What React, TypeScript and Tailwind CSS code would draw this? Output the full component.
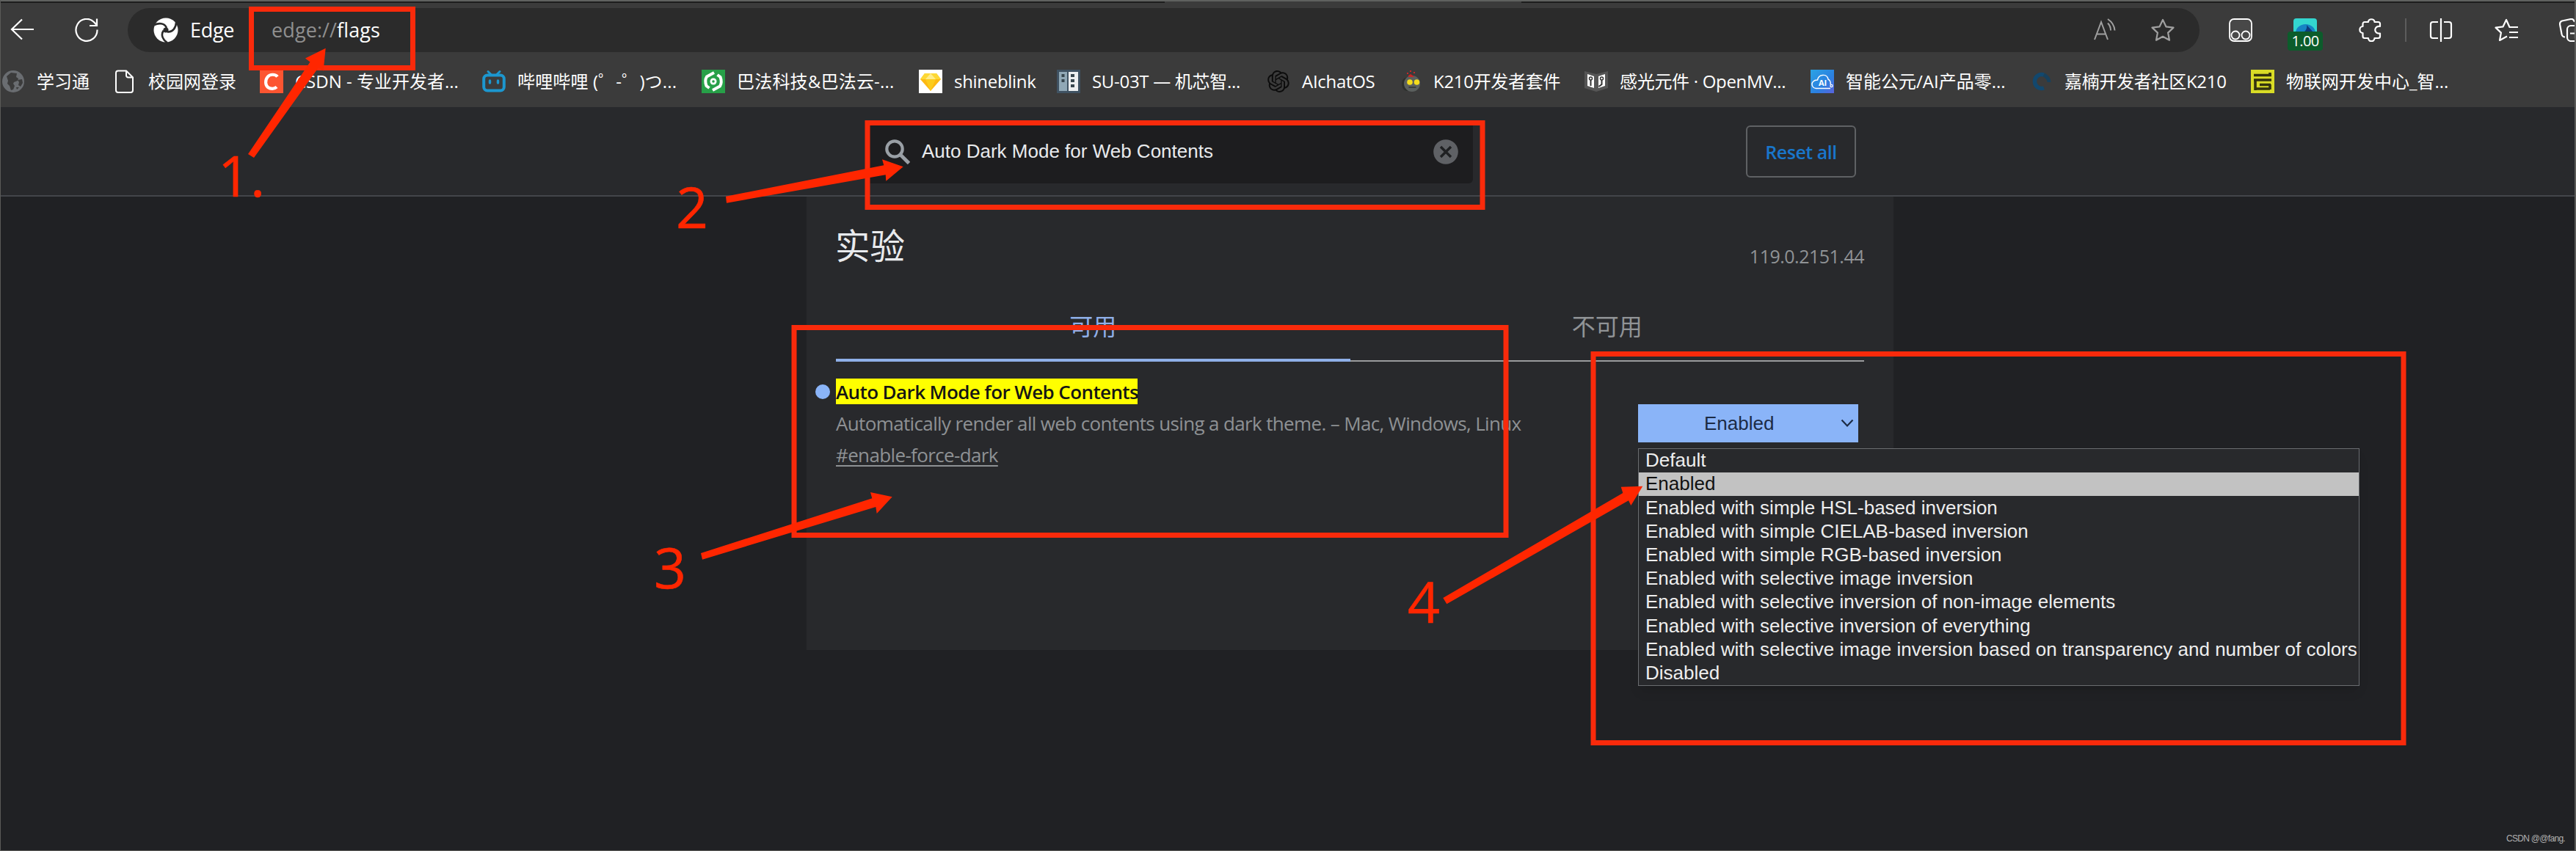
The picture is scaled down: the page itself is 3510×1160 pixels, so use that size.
import { ReactNode } from 'react';
import { RiOpenaiFill } from 'react-icons/ri';

interface IBookmark {
  title: string;
  width: string;
  tracking?: string;
  icon: ReactNode;
}

const options = [
  'Default',
  'Enabled',
  'Enabled with simple HSL-based inversion',
  'Enabled with simple CIELAB-based inversion',
  'Enabled with simple RGB-based inversion',
  'Enabled with selective image inversion',
  'Enabled with selective inversion of non-image elements',
  'Enabled with selective inversion of everything',
  'Enabled with selective image inversion based on transparency and number of colors',
  'Disabled',
];

const bookmarks: IBookmark[] = [
  {
    title: '学习通',
    width: 'w-[152px]',
    icon: (
      <svg viewBox="0 0 32 32" className="size-8">
        <circle cx="16" cy="16" r="15" fill="#6a6d71" />
        <path d="M7 9l6-5 8 1-1 5 3 2-1 3-5 2-1 2 2 3-2 5-3 1-2-6-3-3 1-4zM22 14l6-1 1 5-3 5-3-2 1-4zM20 24l4 0-3 3z" fill="#3b3b3b" />
      </svg>
    ),
  },
  {
    title: '校园网登录',
    width: 'w-[200px]',
    icon: (
      <svg viewBox="0 0 32 32" className="size-8" fill="none" stroke="#fff" strokeWidth="2">
        <path d="M7 1.500h11l9 9V28a3 3 0 0 1-3 3H7a3 3 0 0 1-3-3V4.500a3 3 0 0 1 3-3zM18 1.500V8a2.500 2.500 0 0 0 2.500 2.500H27" />
      </svg>
    ),
  },
  {
    title: 'CSDN - 专业开发者...',
    width: 'w-[303px]',
    icon: (
      <svg viewBox="0 0 32 32" className="size-8">
        <rect width="32" height="32" fill="#fc5531" />
        <path d="M24 9.500C21.500 6 14 5.500 10.500 10c-3.500 4.500-3 11 .5 14 3.500 2.500 9 2.500 12-.5" fill="none" stroke="#fff" strokeWidth="4.200" />
      </svg>
    ),
  },
  {
    title: '哔哩哔哩 (゜-゜)つ...',
    width: 'w-[299px]',
    tracking: 'tracking-[0.15px]',
    icon: (
      <svg viewBox="0 0 32 32" className="size-8" fill="none" stroke="#1c97cf" strokeWidth="4" strokeLinecap="round">
        <rect x="2.200" y="7.500" width="27.600" height="21" rx="5" />
        <path d="M8 2.500l4 4M24 2.500l-4 4" strokeWidth="3" />
        <path d="M10.500 15v3M21.500 15v3" strokeWidth="3.400" />
      </svg>
    ),
  },
  {
    title: '巴法科技&巴法云-...',
    width: 'w-[296px]',
    tracking: 'tracking-[0.2px]',
    icon: (
      <svg viewBox="0 0 32 32" className="size-8">
        <rect width="32" height="32" fill="#27a048" />
        <path d="M17 4L7 9.500c-2.500 4-2 8.500-.5 12.500l4 3M15 28l10-5.500c2.500-4 2-8.500.5-12.500L21.500 7" fill="none" stroke="#fff" strokeWidth="4" />
        <circle cx="16" cy="16" r="4.500" fill="#fff" />
        <circle cx="16" cy="16" r="1.800" fill="#27a048" />
      </svg>
    ),
  },
  {
    title: 'shineblink',
    width: 'w-[188px]',
    tracking: 'tracking-[-0.3px]',
    icon: (
      <svg viewBox="0 0 32 32" className="size-8">
        <rect width="32" height="32" fill="#fff" />
        <path d="M8 5h16l6 8-14 16L2 13z" fill="#fdb913" />
        <path d="M8 5h16l6 8H2z" fill="#fdd835" />
        <path d="M16 5l7 8H9z" fill="#ffec8a" />
        <path d="M9 13h14l-7 16z" fill="#fccc1c" />
      </svg>
    ),
  },
  {
    title: 'SU-03T — 机芯智...',
    width: 'w-[286px]',
    tracking: 'tracking-[-0.3px]',
    icon: (
      <svg viewBox="0 0 32 32" className="size-8">
        <rect width="32" height="32" fill="#3f5262" />
        <rect x="3" y="3" width="11" height="26" fill="#90a8b6" />
        <rect x="16" y="3" width="13" height="26" fill="#eceff1" />
        <path d="M6.500 6h4v4h-4zM6.500 13h4v4h-4zM19 6h5v4h-5zM19 13h5v4h-5zM19 20h5v4h-5z" fill="#37474f" />
      </svg>
    ),
  },
  {
    title: 'AIchatOS',
    width: 'w-[179px]',
    tracking: 'tracking-[-0.3px]',
    icon: <RiOpenaiFill className="size-9 -mx-0.5 text-[#0c0c0c]" />,
  },
  {
    title: 'K210开发者套件',
    width: 'w-[254px]',
    tracking: 'tracking-[-0.3px]',
    icon: (
      <svg viewBox="0 0 32 32" className="size-8">
        <path d="M5 19c0-6 4-9 11-9l6 19H13c-5 0-8-4-8-10z" fill="#2c2f2c" />
        <ellipse cx="19" cy="19" rx="11" ry="11" fill="#5b605e" />
        <circle cx="16" cy="17" r="3.800" fill="#f4dc1c" />
        <circle cx="25.500" cy="17" r="3.800" fill="#f4dc1c" />
        <path d="M14.500 24h10" stroke="#3a3d3c" strokeWidth="2" />
        <path d="M14 8l3-2 3 2 2 2-8 0zM16 1h2v2h-2zM12 4h2v2h-2zM21 3h2v2h-2z" fill="#c62828" />
      </svg>
    ),
  },
  {
    title: '感光元件 · OpenMV...',
    width: 'w-[308px]',
    tracking: 'tracking-[-0.3px]',
    icon: (
      <svg viewBox="0 0 32 32" className="size-8">
        <path d="M0 2l16 4 16-4v23l-16 5-16-5z" fill="#555" />
        <path d="M4 6l9 3v16l-9-3zM28 6l-9 3v16l9-3z" fill="#fff" />
        <path d="M8.500 22V14M23.500 12v8l-4 3" stroke="#333" strokeWidth="2" fill="none" />
        <circle cx="8.500" cy="12" r="2" fill="none" stroke="#333" strokeWidth="1.500" />
        <circle cx="23.500" cy="12" r="2" fill="#fff" stroke="#333" strokeWidth="1.500" />
      </svg>
    ),
  },
  {
    title: '智能公元/AI产品零...',
    width: 'w-[298px]',
    icon: (
      <svg viewBox="0 0 32 32" className="size-8">
        <defs>
          <linearGradient id="cloud" x1="0" y1="0" x2="1" y2="1">
            <stop offset="0" stopColor="#2ba4e4" />
            <stop offset=".6" stopColor="#2b80e0" />
            <stop offset="1" stopColor="#5a63dc" />
          </linearGradient>
        </defs>
        <rect width="32" height="32" fill="url(#cloud)" />
        <path d="M27 20c1-3-1-6-3-7-1-5-5-6-8-5.500-4 .5-6 4-6.500 6.500C4 14 2 17.500 2 20c0 3 2.500 5.500 5.500 5.500H27" fill="none" stroke="#fff" strokeWidth="1.400" />
        <circle cx="28.500" cy="22" r="1.600" fill="none" stroke="#fff" strokeWidth="1.200" />
        <text x="16.500" y="22" textAnchor="middle" fill="#fff" fontSize="11" fontWeight="700" fontFamily="Open Sans, sans-serif">
          AI
        </text>
      </svg>
    ),
  },
  {
    title: '嘉楠开发者社区K210',
    width: 'w-[302px]',
    tracking: 'tracking-[-0.3px]',
    icon: (
      <svg viewBox="0 0 32 32" className="size-8" fill="none">
        <path d="M20 7a9.500 9.500 0 1 0 0 18" stroke="#12486e" strokeWidth="5.500" />
        <path d="M20 7c5 3 7 6 7 10" stroke="#17405c" strokeWidth="5" />
      </svg>
    ),
  },
  {
    title: '物联网开发中心_智...',
    width: 'w-[300px]',
    icon: (
      <svg viewBox="0 0 32 32" className="size-8">
        <rect width="32" height="32" fill="#d9dc26" />
        <path d="M4 7.500h24M26 4v5M4 14h24M6 14v14M6 26h20M26 27v-7M12 20.500h15" fill="none" stroke="#33330f" strokeWidth="3.600" />
      </svg>
    ),
  },
];

function Bookmark({ title, width, tracking, icon }: IBookmark) {
  return (
    <div className={`flex shrink-0 items-center gap-4 whitespace-nowrap ${width}`}>
      <span className="shrink-0">{icon}</span>
      <span className={`text-[24px] leading-8 text-white ${tracking ?? ''}`}>{title}</span>
    </div>
  );
}

function AddressBar() {
  return (
    <div className="ml-10 flex h-[60px] w-[2823px] shrink-0 items-center rounded-full bg-[#2b2b2b] pl-[35px] pr-[34px] text-[27px] text-white">
      <svg viewBox="0 0 34 34" className="size-[34px]">
        <circle cx="17" cy="17" r="16.500" fill="#fff" />
        <g fill="none" stroke="#2b2b2b" strokeWidth="2.600">
          <path d="M1 10c6-3 14-3 17 4" />
          <path d="M1 10c6-3 14-3 17 4" transform="rotate(120 17 17)" />
          <path d="M1 10c6-3 14-3 17 4" transform="rotate(240 17 17)" />
        </g>
        <circle cx="17" cy="17" r="3.600" fill="#2b2b2b" />
      </svg>
      <span className="ml-4 w-[112px] tracking-[-0.3px]">Edge</span>
      <span className="-ml-px tracking-[0.1px]">
        <span className="text-[#8f8f8f]">edge://</span>flags
      </span>
      <svg viewBox="0 0 32 32" className="ml-auto size-8" fill="none" stroke="#a0a0a0" strokeWidth="2">
        <path d="M2 29L11 5l9 24M5 21.500h12M20 6.500c3 3 4 6 4 10M20 1c6 4 9 9 9.500 15.500" />
      </svg>
      <svg viewBox="0 0 32 32" className="ml-[47px] size-8" fill="none" stroke="#a0a0a0" strokeWidth="2.200" strokeLinejoin="round">
        <path d="M16 2l4.400 9.300 10.100 1.300-7.400 7 1.900 10.100L16 24.800 7 29.700l1.900-10.100-7.400-7 10.100-1.300z" />
      </svg>
    </div>
  );
}

function Toolbar() {
  return (
    <div className="h-[146px] overflow-hidden bg-[#3b3b3b]">
      {/* tab strip edge, open under the active tab */}
      <div className="flex h-[4px] border-t-2 border-[#5f615f]">
        <div className="w-[1587px] bg-[#1d1d1d]" />
        <div className="w-[486px]" />
        <div className="flex-1 bg-[#1d1d1d]" />
      </div>
      <div className="mt-[7px] flex h-[60px] items-center pl-[14px]">
        <svg viewBox="0 0 32 32" className="-mt-0.5 size-8 shrink-0" fill="none" stroke="#fff" strokeWidth="2.200">
          <path d="M32 16H2M16 2.500L2 16l14 13.500" />
        </svg>
        <svg viewBox="0 0 32 32" className="ml-14 size-8 shrink-0" fill="none" stroke="#fff" strokeWidth="2.200">
          <path d="M30.500 15.500A14.500 15 0 1 1 26.500 5.500l3.500 4M30 .5v9.500h-10" />
        </svg>
        <AddressBar />
        <svg viewBox="0 0 32 32" className="ml-10 size-8 shrink-0" fill="none" stroke="#fff" strokeWidth="1.800">
          <rect x="1" y="1" width="30" height="30" rx="6" fill="#484848" />
          <circle cx="9" cy="23" r="5.500" />
          <circle cx="23" cy="23" r="5.500" />
        </svg>
        <div className="relative ml-14 size-8 shrink-0">
          <svg viewBox="0 0 32 32" className="size-8">
            <rect width="32" height="32" rx="4" fill="#33d6cf" />
            <path d="M3 20a13.500 12 0 0 1 27 0z" fill="#1683c4" />
            <path d="M18 9l10 11H13c4-3 6-7 5-11z" fill="#0d3a7d" />
          </svg>
          <span className="absolute -left-2 top-[18px] flex h-[26px] w-12 items-center justify-center rounded-sm bg-[#0c5c2b] text-[20px] tracking-[-0.7px] text-white">
            1.00
          </span>
        </div>
        <svg viewBox="0 0 32 32" className="ml-14 size-8 shrink-0" fill="none" stroke="#fff" strokeWidth="2.200" strokeLinejoin="round">
          <path d="M9 5h5c0-5 8.500-5 8.500 0h5a2.500 2.500 0 0 1 2.500 2.500V11c-9-1.500-9 11 0 9.500v4a2.500 2.500 0 0 1-2.500 2.500h-5c0 5.500-8.500 5.500-8.500 0H9a2.500 2.500 0 0 1-2.500-2.500v-4.500c-5.500 0-5.500-9 0-9V7.500A2.500 2.500 0 0 1 9 5z" />
        </svg>
        <div className="ml-8 h-8 w-0.5 shrink-0 bg-[#5c5c5c]" />
        <svg viewBox="0 0 32 32" className="ml-[31px] size-8 shrink-0" fill="none" stroke="#fff" strokeWidth="2.200">
          <path d="M16 0v32M12 5H5a3 3 0 0 0-3 3v16a3 3 0 0 0 3 3h7M20 5h7a3 3 0 0 1 3 3v16a3 3 0 0 1-3 3h-7" />
        </svg>
        <svg viewBox="0 0 32 32" className="ml-[57px] size-8 shrink-0" fill="none" stroke="#fff" strokeWidth="2.200" strokeLinejoin="round">
          <path d="M32 12H20.500L16 2l-4.400 9.300L1.500 12.600l7.400 7L7 30l10-5.500M20 19h12M20 26h12" />
        </svg>
        <svg viewBox="0 0 32 32" className="ml-14 size-8 shrink-0" fill="none" stroke="#fff" strokeWidth="2.200">
          <path d="M8 25.500c-3 0-4-2-4.500-4L1 8c0-3 1-4 3-4.500L16 1c3-.5 4 1 5 4" />
          <rect x="11" y="10" width="22" height="21" rx="5" />
          <path d="M22 14v13M15 20.500h14" />
        </svg>
      </div>
      <div className="mt-6 flex h-8 items-center pl-0.5">
        {bookmarks.map((bookmark) => (
          <Bookmark key={bookmark.title} {...bookmark} />
        ))}
      </div>
    </div>
  );
}

function SearchHeader() {
  return (
    <div className="flex h-[122px] items-start border-b-2 border-[#43454a] bg-[#28292c] pl-[1179px] pt-[18px]">
      <div className="flex h-[86px] w-[828px] items-center rounded-md bg-[#1d1d1f] pl-[27px] pr-5 font-['Liberation_Sans',sans-serif]">
        <svg viewBox="0 0 34 34" className="size-[34px]" fill="none" stroke="#9aa0a6">
          <circle cx="13" cy="13" r="10.700" strokeWidth="4.200" />
          <path d="M21 21l11.500 11.500" strokeWidth="4.800" />
        </svg>
        <span className="mb-0.5 ml-4 flex-1 text-[26px] text-[#e8eaed]">Auto Dark Mode for Web Contents</span>
        <svg viewBox="0 0 34 34" className="size-[34px]">
          <circle cx="17" cy="17" r="16.800" fill="#5f6165" />
          <path d="M10 10l14 14M24 10L10 24" stroke="#1f2022" strokeWidth="3.400" />
        </svg>
      </div>
      <div className="ml-[372px] mt-[7px] flex h-[71px] w-[150px] items-center justify-center rounded-md border-2 border-[#5f6164] pt-0.5 text-[25px] font-semibold tracking-[-0.5px] text-[#1976cb]">
        Reset all
      </div>
    </div>
  );
}

function FlagSelect() {
  return (
    <div className="relative mr-2 mt-[35px] h-[52px] w-[300px] shrink-0 bg-[#8ab4f8] font-['Liberation_Sans',sans-serif] text-[26px]">
      <div className="flex h-full items-center pl-[90px] pr-1.5 text-[#1c2b45]">
        Enabled
        <svg viewBox="0 0 18 12" className="ml-auto h-3 w-[18px]" fill="none" stroke="#1c2b45" strokeWidth="2.200">
          <path d="M1.500 1.500L9 9.500l7.500-8" />
        </svg>
      </div>
      <div className="absolute left-0 top-[60px] flex h-[324px] w-[983px] flex-col border border-[#6a6c70] bg-[#28292c] shadow-lg">
        {options.map((option) => (
          <div
            key={option}
            className={`flex flex-1 items-center whitespace-nowrap pb-0.5 pl-[9px] leading-none ${
              option === 'Enabled' ? 'bg-[#c2c2c2] text-[#111]' : 'text-[#eee]'
            }`}
          >
            {option}
          </div>
        ))}
      </div>
    </div>
  );
}

function FlagsPanel() {
  return (
    <div className="ml-[1099px] h-[618px] w-[1481px] bg-[#28292c] px-10 pt-[39px]">
      <div className="flex items-end justify-between">
        <h1 className="-ml-px text-[47.500px] leading-[56px] text-[#e8eaed]">实验</h1>
        <span className="text-[25px] leading-7 tracking-[-0.5px] text-[#909396]">119.0.2151.44</span>
      </div>
      <div className="mt-10 flex h-[90px] text-[32px]">
        <div className="flex flex-1 items-center justify-center border-b-4 border-[#8fafe8] pb-0.5 text-[#8fafe8]">可用</div>
        <div className="flex flex-1 items-center justify-center border-b-2 border-[#9a9b9d] pb-1 text-[#909396]">不可用</div>
      </div>
      <div className="mt-[23px] flex items-start justify-between">
        <div className="relative whitespace-nowrap text-[26px] text-[#8e9194]">
          <span className="absolute -left-7 top-2 size-5 rounded-full bg-[#8ab4f8]" />
          <h3 className="h-[35px] w-[411px] bg-[#ff0] font-semibold leading-[37px] tracking-[-0.6px] text-[#151515]">
            Auto Dark Mode for Web Contents
          </h3>
          <p className="mt-[5px] leading-[43px] tracking-[-0.64px]">
            Automatically render all web contents using a dark theme. – Mac, Windows, Linux
          </p>
          <p className="leading-[43px] tracking-[-0.64px] underline decoration-2 underline-offset-4">#enable-force-dark</p>
        </div>
        <FlagSelect />
      </div>
    </div>
  );
}

function Annotations() {
  return (
    <svg viewBox="0 0 3510 1160" className="pointer-events-none absolute inset-0 h-[1160px] w-[3510px]">
      <g fill="none" stroke="#f92a0b" strokeWidth="7">
        <rect x="342.500" y="12.500" width="220" height="80" />
        <rect x="1182" y="167.500" width="838" height="115" />
        <rect x="1082" y="446.500" width="970" height="283" />
        <rect x="2171" y="482.500" width="1104" height="530" />
      </g>
      <g fill="#ff2600">
        <path d="M338 210L422.500 84.500 416 79.400 443.700 65.700 440.600 96.400 434 92 346 215z" />
        <path d="M989 267.700L1204.300 225.300 1202 217.300 1230.700 227.300 1207.300 246.700 1206.700 238.300 990 276.700z" />
        <path d="M955 754L1188.300 679.300 1186 671 1215.700 677.300 1194.700 700 1193.300 691 957 762.700z" />
        <path d="M1966.300 815L2211.300 672 2208.700 663.700 2238.300 662.700 2222.300 689 2219 682.300 1971.300 823.300z" />
      </g>
      <g fill="#ff2600" stroke="#ff2600" strokeWidth="0.6" fontSize="77" fontFamily="Open Sans, sans-serif">
        <text x="297" y="268">1.</text>
        <text x="921" y="311">2</text>
        <text x="891" y="802">3</text>
        <text x="1918" y="849">4</text>
      </g>
    </svg>
  );
}

function App() {
  return (
    <div className="relative h-[1160px] w-[3510px] overflow-hidden bg-[#202124] font-['Open_Sans','Noto_Sans_CJK_SC',sans-serif]">
      <Toolbar />
      <SearchHeader />
      <FlagsPanel />
      <Annotations />
      <div className="pointer-events-none absolute inset-0 border-b border-l border-r-2 border-[#5a5a58]" />
      <span className="absolute bottom-[9px] right-[15px] font-['Liberation_Sans',sans-serif] text-[12px] leading-4 tracking-[-0.7px] text-[#b0b0b0]">
        CSDN @@fang.
      </span>
    </div>
  );
}

export default App;
